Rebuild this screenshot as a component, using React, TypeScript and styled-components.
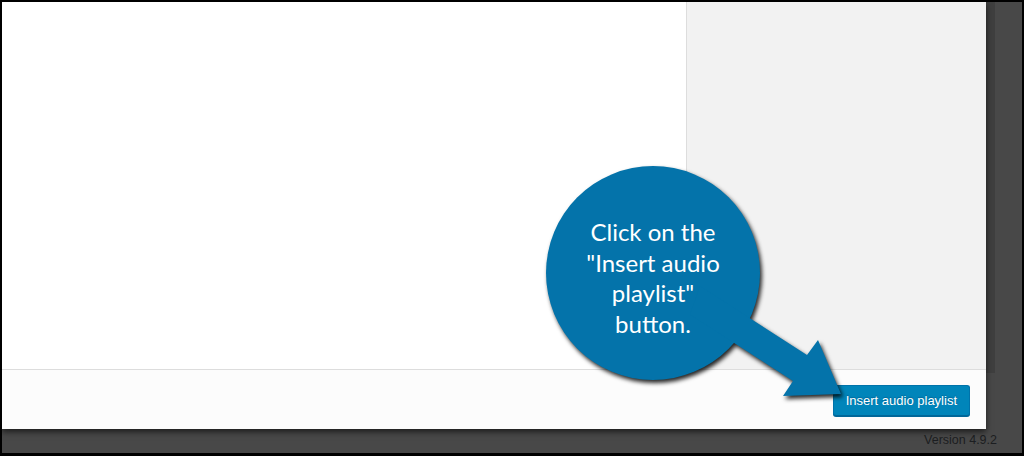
import React from "react";
import styled, { createGlobalStyle } from "styled-components";

const GlobalStyle = createGlobalStyle`
  html, body {
    margin: 0;
    padding: 0;
    background: #000;
  }
  * {
    box-sizing: border-box;
  }
`;

const Frame = styled.div`
  width: 1024px;
  height: 456px;
  padding: 2px 2px 3px 2px;
  background: #000;
`;

const Screen = styled.div`
  position: relative;
  width: 100%;
  height: 100%;
  background: #484848;
  display: flex;
  flex-direction: column;
  overflow: hidden;
`;

const TopRow = styled.div`
  display: flex;
  align-items: flex-start;
`;

const Modal = styled.div`
  width: 984px;
  height: 427px;
  display: flex;
  flex-direction: column;
  background: #fff;
  box-shadow: 0 3px 6px rgba(0, 0, 0, 0.6);
  position: relative;
  z-index: 1;
`;

const Gutter = styled.div`
  width: 9px;
  height: 371px;
  background: #3f3f3f;
`;

const ModalBody = styled.div`
  flex: 1;
  display: flex;
  border-bottom: 1px solid #dddddd;
`;

const Content = styled.div`
  flex: 1;
  background: #fff;
`;

const Sidebar = styled.div`
  width: 300px;
  background: #f2f2f2;
  border-left: 1px solid #dddddd;
`;

const Toolbar = styled.div`
  height: 59px;
  background: #fcfcfc;
  display: flex;
  justify-content: flex-end;
  align-items: flex-start;
  padding: 15px 16px 0 0;
`;

const PrimaryButton = styled.button`
  height: 31px;
  padding: 0 12px;
  border: 1px solid #0073aa;
  border-bottom-color: #006799;
  border-radius: 3px;
  background: #0085ba;
  color: #fff;
  font-family: "Liberation Sans", Arial, sans-serif;
  font-size: 13px;
  line-height: 28px;
  box-shadow: 0 1px 0 #006799;
  text-shadow: 0 -1px 1px #006799;
  cursor: pointer;
`;

const Footer = styled.div`
  display: flex;
  justify-content: flex-end;
  padding: 3px 25px 0 0;
  font-family: "Liberation Sans", Arial, sans-serif;
  font-size: 12.5px;
  line-height: 17px;
  color: #1c1e21;
`;

const Callout = styled.div`
  position: absolute;
  left: 528px;
  top: 158px;
  width: 340px;
  height: 250px;
  z-index: 2;
`;

const CalloutShape = styled.svg`
  position: absolute;
  left: 0;
  top: 0;
  overflow: visible;
  filter: drop-shadow(2px 3px 2px rgba(0, 0, 0, 0.85));
`;

const CalloutText = styled.div`
  position: absolute;
  left: 13px;
  top: 57px;
  width: 220px;
  text-align: center;
  color: #fff;
  font-family: Lato, "Open Sans", sans-serif;
  font-size: 24px;
  line-height: 30.5px;
`;

const App = () => {
  return (
    <>
      <GlobalStyle />
      <Frame>
        <Screen>
          <TopRow>
            <Modal>
              <ModalBody>
                <Content />
                <Sidebar />
              </ModalBody>
              <Toolbar>
                <PrimaryButton>Insert audio playlist</PrimaryButton>
              </Toolbar>
            </Modal>
            <Gutter />
          </TopRow>
          <Footer>Version 4.9.2</Footer>
          <Callout>
            <CalloutShape width="340" height="250" viewBox="0 0 340 250">
              <g fill="#0473aa">
                <circle cx="123" cy="113" r="107" />
                <polygon points="170,126 277,195 288,180 311,234 253,236 263,221 160,154.5" />
              </g>
            </CalloutShape>
            <CalloutText>
              Click on the
              <br />
              "Insert audio
              <br />
              playlist"
              <br />
              button.
            </CalloutText>
          </Callout>
        </Screen>
      </Frame>
    </>
  );
};

export default App;
